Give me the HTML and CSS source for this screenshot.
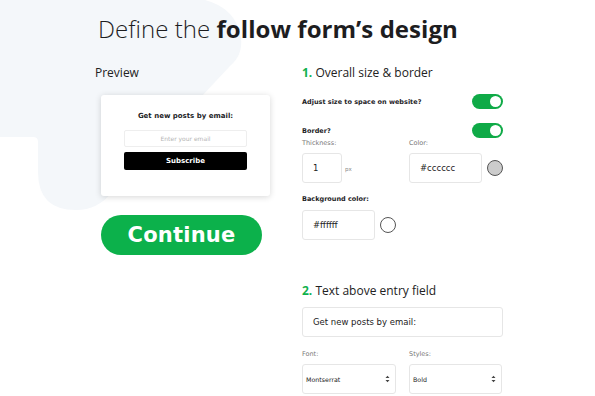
FILE: index.html
```html
<!DOCTYPE html>
<html>
<head>
<meta charset="utf-8">
<link rel="stylesheet" href="styles.css">
</head>
<body>
<div class="page">
  <svg class="blob" width="260" height="220" viewBox="0 0 260 220">
    <path d="M0,0 H205 Q236,8 241,38 Q243,55 230,66 L112,192 Q98,210 76,210 Q38,210 38,172 V142 Q38,137 33,137 H0 Z" fill="#f4f7fa"/>
  </svg>
  <h1 class="title">Define the <b>follow form’s design</b></h1>
  <div class="cols">
    <div class="left">
      <div class="sec-title">Preview</div>
      <div class="card">
        <div class="card-head">Get new posts by email:</div>
        <div class="card-input">Enter your email</div>
        <div class="card-btn">Subscribe</div>
      </div>
      <div class="continue">Continue</div>
    </div>
    <div class="right">
      <div class="sec-title"><span class="num">1.</span> Overall size &amp; border</div>
      <div class="toggle-row first"><span class="lbl-bold">Adjust size to space on website?</span><span class="toggle"></span></div>
      <div class="toggle-row second"><span class="lbl-bold">Border?</span><span class="toggle"></span></div>
      <div class="pair">
        <div class="field">
          <div class="lbl">Thickness:</div>
          <div class="unit-row"><div class="box small">1</div><span class="unit">px</span></div>
        </div>
        <div class="field">
          <div class="lbl">Color:</div>
          <div class="unit-row"><div class="box color">#cccccc</div><span class="swatch grey"></span></div>
        </div>
      </div>
      <div class="lbl-bold bg-lbl">Background color:</div>
      <div class="unit-row"><div class="box color">#ffffff</div><span class="swatch white"></span></div>
      <div class="sec-title sec2"><span class="num">2.</span> Text above entry field</div>
      <div class="box wide">Get new posts by email:</div>
      <div class="pair pair2">
        <div class="field">
          <div class="lbl">Font:</div>
          <div class="box select">Montserrat<span class="arrows"><svg width="5" height="8" viewBox="0 0 5 8"><path d="M0.5,3 L2.5,0.8 L4.5,3 Z M0.5,5 L2.5,7.2 L4.5,5 Z" fill="#444"/></svg></span></div>
        </div>
        <div class="field">
          <div class="lbl">Styles:</div>
          <div class="box select">Bold<span class="arrows"><svg width="5" height="8" viewBox="0 0 5 8"><path d="M0.5,3 L2.5,0.8 L4.5,3 Z M0.5,5 L2.5,7.2 L4.5,5 Z" fill="#444"/></svg></span></div>
        </div>
      </div>
    </div>
  </div>
</div>
</body>
</html>
```

FILE: styles.css
```css
html, body {
  margin: 0;
  padding: 0;
  background: #ffffff;
}
body {
  font-family: "DejaVu Sans", "Open Sans", sans-serif;
  color: #1d1d1f;
  width: 595px;
  height: 396px;
  overflow: hidden;
}
.page {
  position: relative;
  width: 595px;
  height: 396px;
}
.blob {
  position: absolute;
  left: 0;
  top: 0;
  z-index: 0;
}
.title {
  position: relative;
  margin: 0;
  padding: 14px 0 0 98px;
  font-family: "Open Sans", "DejaVu Sans", sans-serif;
  font-size: 24px;
  line-height: 30px;
  font-weight: 300;
  letter-spacing: 0.05px;
  color: #1d1d1f;
}
.title b {
  font-weight: 700;
}
.cols {
  position: relative;
  display: flex;
  padding-left: 95px;
  margin-top: 21px;
  gap: 31px;
}
.left {
  width: 175px;
  flex-shrink: 0;
  display: flex;
  flex-direction: column;
}
.right {
  width: 202px;
  flex-shrink: 0;
  display: flex;
  flex-direction: column;
  padding-left: 1px;
}
.sec-title {
  font-family: "Open Sans", "DejaVu Sans", sans-serif;
  font-size: 12px;
  line-height: 16px;
  color: #222;
}
.num {
  color: #0fb14d;
  font-weight: 700;
}
.card {
  margin: 14px 0 0 6px;
  width: 169px;
  height: 101px;
  background: #fff;
  border-radius: 3px;
  box-shadow: 0 1px 6px rgba(0,0,0,0.16);
  display: flex;
  flex-direction: column;
  align-items: center;
  box-sizing: border-box;
  padding-top: 17px;
}
.card-head {
  font-size: 7px;
  font-weight: 700;
  line-height: 9px;
}
.card-input {
  margin-top: 9px;
  width: 123px;
  height: 17px;
  box-sizing: border-box;
  border: 1px solid #eeeeee;
  border-radius: 2px;
  font-size: 6px;
  color: #b5b5b5;
  display: flex;
  align-items: center;
  justify-content: center;
}
.card-btn {
  margin-top: 5px;
  width: 123px;
  height: 18px;
  background: #000;
  border-radius: 2px;
  color: #fff;
  font-size: 7px;
  font-weight: 700;
  display: flex;
  align-items: center;
  justify-content: center;
}
.continue {
  margin: 19px 0 0 6px;
  width: 161px;
  height: 40px;
  border-radius: 20px;
  background: #0cb14b;
  color: #fff;
  font-weight: 700;
  font-size: 21px;
  display: flex;
  align-items: center;
  justify-content: center;
  letter-spacing: 0.2px;
}
.toggle-row {
  display: flex;
  justify-content: space-between;
  align-items: center;
  width: 201px;
}
.toggle-row.first {
  margin-top: 13px;
}
.toggle-row.second {
  margin-top: 14px;
}
.lbl-bold {
  font-size: 6.5px;
  font-weight: 700;
  color: #1d1d1f;
}
.toggle {
  position: relative;
  width: 31px;
  height: 15px;
  border-radius: 8px;
  background: #0faa47;
}
.toggle::after {
  content: "";
  position: absolute;
  right: 2px;
  top: 2px;
  width: 11px;
  height: 11px;
  border-radius: 50%;
  background: #fff;
}
.pair {
  display: flex;
  margin-top: 1px;
}
.pair .field {
  width: 107px;
  flex-shrink: 0;
}
.lbl {
  font-size: 6.5px;
  color: #777;
  line-height: 9px;
  margin-bottom: 5px;
}
.unit-row {
  display: flex;
  align-items: center;
}
.box {
  box-sizing: border-box;
  height: 30px;
  border: 1px solid #e6e6e6;
  border-radius: 3px;
  background: #fff;
  display: flex;
  align-items: center;
  font-size: 8.5px;
  color: #222;
  padding-left: 10px;
}
.box.small {
  width: 40px;
}
.box.color {
  width: 73px;
}
.unit {
  font-size: 5.5px;
  color: #888;
  margin-left: 3px;
  margin-top: 2px;
}
.swatch {
  box-sizing: border-box;
  width: 16px;
  height: 16px;
  border-radius: 50%;
  border: 1px solid #555;
  margin-left: 5px;
}
.swatch.grey {
  background: #cccccc;
}
.swatch.white {
  background: #ffffff;
}
.bg-lbl {
  margin-top: 12px;
  margin-bottom: 6px;
  line-height: 9px;
}
.sec2 {
  margin-top: 43px;
}
.box.wide {
  margin-top: 8px;
  width: 201px;
  font-size: 8.5px;
}
.pair2 {
  margin-top: 13px;
}
.box.select {
  width: 94px;
  font-size: 6.3px;
  padding-left: 3px;
  justify-content: space-between;
  padding-right: 5px;
}
.pair2 .field:last-child .box.select {
  width: 93px;
}
.arrows {
  display: flex;
}
```
